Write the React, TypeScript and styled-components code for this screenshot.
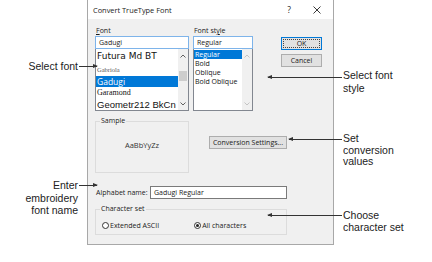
import React from 'react';
import styled, { createGlobalStyle } from 'styled-components';

const Global = createGlobalStyle`
  html, body { margin: 0; padding: 0; background: #fff; }
  body { width: 432px; height: 262px; overflow: hidden; }
`;

const UI = `"Open Sans", "Noto Sans", sans-serif`;

const Figure = styled.div`
  position: relative;
  width: 432px;
  height: 262px;
  box-sizing: border-box;
  padding-left: 87px;
  display: flex;
  align-items: flex-start;
`;

const Dialog = styled.div`
  width: 247px;
  height: 245px;
  box-sizing: border-box;
  background: #f0f0f0;
  border: 1px solid #a8a8a8;
  border-top: none;
  display: flex;
  flex-direction: column;
  font-family: ${UI};
  font-size: 7px;
  color: #1a1a1a;
  white-space: nowrap;
`;

const TitleBar = styled.div`
  height: 19px;
  background: #fff;
  display: flex;
  align-items: center;
  padding: 0 10px 0 5px;
  font-size: 7.4px;
  color: #222;
`;

const Title = styled.span`
  flex: 1;
`;

const TitleBtn = styled.span<{ gap?: number }>`
  width: 12px;
  display: flex;
  justify-content: center;
  margin-left: ${(p) => p.gap ?? 0}px;
  font-size: 8.5px;
`;

const Body = styled.div`
  padding: 7px 0 0 7px;
  display: flex;
  flex-direction: column;
`;

const TopRow = styled.div`
  display: flex;
  align-items: flex-start;
`;

const Col = styled.div<{ w: number; ml?: number }>`
  width: ${(p) => p.w}px;
  margin-left: ${(p) => p.ml ?? 0}px;
  display: flex;
  flex-direction: column;
`;

const FieldLabel = styled.div`
  height: 10px;
  line-height: 9px;
  padding-left: 1px;
  u { text-decoration: underline; }
`;

const TextBox = styled.div<{ focus?: boolean; w?: number }>`
  height: 13px;
  box-sizing: border-box;
  width: ${(p) => (p.w ? `${p.w}px` : 'auto')};
  border: 1px solid ${(p) => (p.focus ? '#7eb4ea' : '#7a7a7a')};
  background: #fff;
  display: flex;
  align-items: center;
  padding-left: 3px;
`;

const ListBox = styled.div<{ h: number }>`
  height: ${(p) => p.h}px;
  box-sizing: border-box;
  border: 1px solid #828790;
  border-top: none;
  background: #fff;
  display: flex;
  overflow: hidden;
`;

const Items = styled.div<{ pt?: number }>`
  flex: 1;
  display: flex;
  flex-direction: column;
  padding-top: ${(p) => p.pt ?? 0}px;
  overflow: hidden;
  min-width: 0;
`;

const Item = styled.div<{ h: number; sel?: boolean; ff?: string; fs?: number; fw?: number; c?: string }>`
  height: ${(p) => p.h}px;
  flex: none;
  display: flex;
  align-items: center;
  padding-left: 1px;
  white-space: nowrap;
  background: ${(p) => (p.sel ? '#0078d7' : 'transparent')};
  color: ${(p) => (p.sel ? '#fff' : p.c ?? '#111')};
  font-family: ${(p) => p.ff ?? UI};
  font-size: ${(p) => p.fs ?? 7}px;
  font-weight: ${(p) => p.fw ?? 400};
`;

const Caret = styled.span`
  display: inline-block;
  width: 1px;
  height: 9px;
  background: #f0a040;
  margin-left: 3px;
`;

const ScrollBar = styled.div`
  width: 10px;
  flex: none;
  background: #f0f0f0;
  display: flex;
  flex-direction: column;
  align-items: center;
`;

const ArrowCell = styled.div`
  height: 13px;
  width: 10px;
  display: flex;
  align-items: center;
  justify-content: center;
`;

const Thumb = styled.div<{ top: number; h: number }>`
  width: 8px;
  height: ${(p) => p.h}px;
  margin-top: ${(p) => p.top}px;
  background: #cdcdcd;
`;

const Spacer = styled.div`
  flex: 1;
`;

const Button = styled.button<{ def?: boolean; w: number; mt?: number; ml?: number }>`
  width: ${(p) => p.w}px;
  height: 13px;
  margin: ${(p) => p.mt ?? 0}px 0 0 ${(p) => p.ml ?? 0}px;
  padding: 0;
  box-sizing: border-box;
  background: #e1e1e1;
  border: 1px solid ${(p) => (p.def ? '#0078d7' : '#adadad')};
  font-family: ${UI};
  font-size: 7px;
  color: #1a1a1a;
  display: flex;
  align-items: center;
  justify-content: center;
  position: relative;
  white-space: nowrap;
  ${(p) =>
    p.def
      ? `&::after { content: ''; position: absolute; inset: 1px; border: 1px dotted #444; }`
      : ''}
`;

const MidRow = styled.div`
  display: flex;
  align-items: flex-start;
  margin-top: 10px;
`;

const Group = styled.div<{ w: number; h: number; mt?: number }>`
  position: relative;
  width: ${(p) => p.w}px;
  height: ${(p) => p.h}px;
  margin-top: ${(p) => p.mt ?? 0}px;
  box-sizing: border-box;
  border: 1px solid #dcdcdc;
  display: flex;
  flex-direction: column;
`;

const Legend = styled.span`
  position: absolute;
  left: 4px;
  top: -6px;
  padding: 0 1px;
  background: #f0f0f0;
  line-height: 10px;
`;

const SampleText = styled.div`
  margin: auto;
  padding-bottom: 4px;
  font-size: 7.5px;
  color: #333;
`;

const NameRow = styled.div`
  display: flex;
  align-items: center;
  margin-top: 13px;
  padding-left: 1px;
`;

const NameLabel = styled.span`
  width: 54px;
`;

const RadioRow = styled.div`
  display: flex;
  align-items: center;
  height: 10px;
  margin-top: 10px;
  padding-left: 6px;
`;

const Radio = styled.span<{ on?: boolean; ml?: number }>`
  width: 7px;
  height: 7px;
  box-sizing: border-box;
  border-radius: 50%;
  border: 1px solid #333;
  background: #fff;
  margin-left: ${(p) => p.ml ?? 0}px;
  margin-right: 1px;
  display: flex;
  align-items: center;
  justify-content: center;
  &::after {
    content: '';
    width: 3px;
    height: 3px;
    border-radius: 50%;
    background: ${(p) => (p.on ? '#222' : 'transparent')};
  }
`;

const Callout = styled.div<{ x: number; y: number; w?: number; right?: boolean; lh?: number }>`
  position: absolute;
  left: ${(p) => p.x}px;
  top: ${(p) => p.y}px;
  width: ${(p) => p.w ?? 90}px;
  text-align: ${(p) => (p.right ? 'right' : 'left')};
  font-family: "Liberation Sans", Arial, sans-serif;
  font-size: 10.5px;
  line-height: ${(p) => p.lh ?? 12.5}px;
  color: #222;
`;

const Leader = styled.div<{ x: number; y: number; w: number }>`
  position: absolute;
  left: ${(p) => p.x}px;
  top: ${(p) => p.y}px;
  width: ${(p) => p.w}px;
  height: 1px;
  background: #333;
`;

const Head = styled.span<{ dir: 'l' | 'r' }>`
  position: absolute;
  top: -2px;
  ${(p) => (p.dir === 'r' ? 'right: -1px;' : 'left: -1px;')}
  width: 0;
  height: 0;
  border-top: 2.5px solid transparent;
  border-bottom: 2.5px solid transparent;
  ${(p) => (p.dir === 'r' ? 'border-left: 5px solid #333;' : 'border-right: 5px solid #333;')}
`;

const Chevron = ({ up, light }: { up?: boolean; light?: boolean }) => (
  <svg width="6" height="4" viewBox="0 0 6 4">
    <polyline
      points={up ? '0.5,3.5 3,1 5.5,3.5' : '0.5,0.5 3,3 5.5,0.5'}
      fill="none"
      stroke={light ? '#c4c4c4' : '#606060'}
      strokeWidth="1"
    />
  </svg>
);

const CloseIcon = () => (
  <svg width="8" height="8" viewBox="0 0 8 8">
    <path d="M0.5 0.5 L7.5 7.5 M7.5 0.5 L0.5 7.5" stroke="#222" strokeWidth="0.9" />
  </svg>
);

export default function App() {
  return (
    <>
      <Global />
      <Figure>
        <Dialog>
          <TitleBar>
            <Title>Convert TrueType Font</Title>
            <TitleBtn>?</TitleBtn>
            <TitleBtn gap={16}>
              <CloseIcon />
            </TitleBtn>
          </TitleBar>
          <Body>
            <TopRow>
              <Col w={94}>
                <FieldLabel>
                  <u>F</u>ont
                </FieldLabel>
                <TextBox focus>Gadugi</TextBox>
                <ListBox h={62}>
                  <Items>
                    <Item h={14} ff={`"DejaVu Sans", sans-serif`} fs={9} fw={500}>
                      Futura Md BT
                    </Item>
                    <Item h={13} ff={`"Liberation Serif", serif`} fs={6.5} c="#555">
                      Gabriola
                    </Item>
                    <Item h={11} sel fs={8.5}>
                      Gadugi
                    </Item>
                    <Item h={11} ff={`"Liberation Serif", serif`} fs={8}>
                      Garamond
                    </Item>
                    <Item h={13} ff={`"Liberation Sans", sans-serif`} fs={9.5}>
                      Geometr212 BkCn<Caret />
                    </Item>
                  </Items>
                  <ScrollBar>
                    <ArrowCell>
                      <Chevron up />
                    </ArrowCell>
                    <Thumb top={9} h={10} />
                    <Spacer />
                    <ArrowCell>
                      <Chevron />
                    </ArrowCell>
                  </ScrollBar>
                </ListBox>
              </Col>
              <Col w={60} ml={4}>
                <FieldLabel>
                  Font st<u>y</u>le
                </FieldLabel>
                <TextBox focus>Regular</TextBox>
                <ListBox h={62}>
                  <Items pt={1}>
                    <Item h={9} sel>
                      Regular
                    </Item>
                    <Item h={9}>Bold</Item>
                    <Item h={9}>Oblique</Item>
                    <Item h={9}>Bold Oblique</Item>
                  </Items>
                  <ScrollBar>
                    <ArrowCell>
                      <Chevron up light />
                    </ArrowCell>
                    <Spacer />
                    <ArrowCell>
                      <Chevron light />
                    </ArrowCell>
                  </ScrollBar>
                </ListBox>
              </Col>
              <Col w={41} ml={28}>
                <Button def w={41} mt={11}>
                  OK
                </Button>
                <Button w={41} mt={4}>
                  Cancel
                </Button>
              </Col>
            </TopRow>
            <MidRow>
              <Group w={94} h={52}>
                <Legend>Sample</Legend>
                <SampleText>AaBbYyZz</SampleText>
              </Group>
              <Button w={78} mt={15} ml={20}>
                Conversion Settings...
              </Button>
            </MidRow>
            <NameRow>
              <NameLabel>Alphabet name:</NameLabel>
              <TextBox w={137}>Gadugi Regular</TextBox>
            </NameRow>
            <Group w={192} h={26} mt={10}>
              <Legend>Character set</Legend>
              <RadioRow>
                <Radio />
                Extended ASCII
                <Radio on ml={35} />
                All characters
              </RadioRow>
            </Group>
          </Body>
        </Dialog>

        <Callout x={0} y={60} w={78} right>
          Select font
        </Callout>
        <Leader x={79} y={66} w={18}>
          <Head dir="r" />
        </Leader>

        <Callout x={0} y={179} w={78} right>
          Enter
          <br />
          embroidery
          <br />
          font name
        </Callout>
        <Leader x={79} y={185} w={18}>
          <Head dir="r" />
        </Leader>

        <Callout x={343} y={69}>
          Select font
          <br />
          style
        </Callout>
        <Leader x={268} y={77} w={74}>
          <Head dir="l" />
        </Leader>

        <Callout x={343} y={133} lh={11.5}>
          Set
          <br />
          conversion
          <br />
          values
        </Callout>
        <Leader x={289} y={139} w={53}>
          <Head dir="l" />
        </Leader>

        <Callout x={343} y={209} lh={12}>
          Choose
          <br />
          character set
        </Callout>
        <Leader x={268} y={215} w={74}>
          <Head dir="l" />
        </Leader>
      </Figure>
    </>
  );
}
